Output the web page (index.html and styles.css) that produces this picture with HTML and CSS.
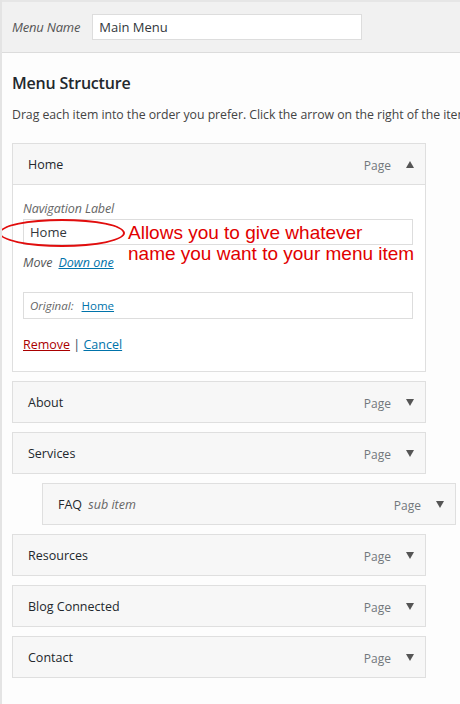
FILE: index.html
```html
<!DOCTYPE html>
<html>
<head>
<meta charset="utf-8">
<link rel="stylesheet" href="styles.css">
</head>
<body>
<div class="page">
  <div class="header">
    <span class="name-label">Menu Name</span>
    <div class="name-input">Main Menu</div>
  </div>
  <div class="content">
    <h2 class="title">Menu Structure</h2>
    <div class="desc-wrap"><p class="desc">Drag each item into the order you prefer. Click the arrow on the right of the item to reveal additional configuration options.</p></div>
    <ul class="menu">
      <li class="item open">
        <div class="item-bar">
          <span class="item-title">Home</span>
          <span class="item-type">Page</span>
          <span class="arrow up"></span>
        </div>
        <div class="item-body">
          <div class="field-label">Navigation Label</div>
          <div class="field-input">Home</div>
          <div class="move"><span class="move-label">Move</span><a class="link">Down one</a></div>
          <div class="original"><span class="orig-label">Original:</span><a class="link">Home</a></div>
          <div class="actions"><a class="remove">Remove</a> <span class="sep">|</span> <a class="link">Cancel</a></div>
        </div>
        <div class="ellipse"></div>
        <div class="note">Allows you to give whatever<br>name you want to your menu item</div>
      </li>
      <li class="item">
        <div class="item-bar"><span class="item-title">About</span><span class="item-type">Page</span><span class="arrow"></span></div>
      </li>
      <li class="item">
        <div class="item-bar"><span class="item-title">Services</span><span class="item-type">Page</span><span class="arrow"></span></div>
      </li>
      <li class="item sub">
        <div class="item-bar"><span class="item-title">FAQ <em class="subtag">sub item</em></span><span class="item-type">Page</span><span class="arrow"></span></div>
      </li>
      <li class="item">
        <div class="item-bar"><span class="item-title">Resources</span><span class="item-type">Page</span><span class="arrow"></span></div>
      </li>
      <li class="item">
        <div class="item-bar"><span class="item-title">Blog Connected</span><span class="item-type">Page</span><span class="arrow"></span></div>
      </li>
      <li class="item">
        <div class="item-bar"><span class="item-title">Contact</span><span class="item-type">Page</span><span class="arrow"></span></div>
      </li>
    </ul>
  </div>
</div>
</body>
</html>
```
FILE: styles.css
```css
html, body {
  margin: 0;
  padding: 0;
}
body {
  background: #fdfdfd;
  font-family: "Open Sans", "Noto Sans", sans-serif;
  color: #23282d;
  width: 460px;
  height: 704px;
  overflow: hidden;
}
.page {
  border-left: 2px solid #e4e4e4;
  min-height: 704px;
  box-sizing: border-box;
  overflow: hidden;
}
.header {
  height: 50px;
  background: #f1f1f1;
  border-top: 2px solid #e6e6e6;
  border-bottom: 1px solid #dcdcdc;
  display: flex;
  align-items: center;
  padding-left: 10px;
}
.name-label {
  font-style: italic;
  font-size: 13px;
  color: #555;
  letter-spacing: -0.2px;
}
.name-input {
  margin-left: 12px;
  width: 262px;
  height: 24px;
  border: 1px solid #ddd;
  background: #fff;
  font-size: 13px;
  line-height: 24px;
  padding-left: 6px;
  color: #32373c;
}
.content {
  padding: 0 10px;
}
.title {
  font-size: 16px;
  font-weight: 600;
  margin: 19px 0 0;
  line-height: 22px;
  color: #23282d;
  letter-spacing: -0.2px;
}
.desc-wrap {
  margin-top: 12px;
  width: 448px;
  overflow: hidden;
}
.desc {
  margin: 0;
  font-size: 12.3px;
  line-height: 18px;
  white-space: nowrap;
  color: #444;
  letter-spacing: -0.04px;
}
.menu {
  list-style: none;
  margin: 19px 0 0;
  padding: 0;
  display: flex;
  flex-direction: column;
  gap: 9px;
  width: 414px;
}
.item {
  position: relative;
  border: 1px solid #dfdfdf;
  background: #f7f7f7;
}
.item.sub {
  margin-left: 30px;
  margin-right: -30px;
}
.item-bar {
  height: 40px;
  display: flex;
  align-items: center;
  padding: 0 11px 0 15px;
}
.item.open .item-bar {
  border-bottom: 1px solid #dfdfdf;
}
.item-title {
  flex: 1;
  font-size: 12.5px;
  font-weight: 500;
  color: #23282d;
}
.subtag {
  font-weight: 400;
  color: #666;
  margin-left: 3px;
}
.item-type {
  font-size: 12px;
  color: #72777c;
  margin-right: 15px;
  margin-top: 2px;
}
.arrow {
  width: 0;
  height: 0;
  border-left: 4px solid transparent;
  border-right: 4px solid transparent;
  border-top: 7px solid #555;
}
.arrow.up {
  border-top: 0;
  border-bottom: 7px solid #555;
}
.item-body {
  background: #fff;
  height: 186px;
  padding: 15px 12px 0 10px;
  box-sizing: border-box;
  font-size: 12.5px;
}
.field-label {
  font-style: italic;
  color: #666;
  line-height: 18px;
  letter-spacing: -0.1px;
}
.field-input {
  margin-top: 1px;
  height: 24px;
  border: 1px solid #ddd;
  background: #fff;
  line-height: 24px;
  padding-left: 6px;
  color: #32373c;
  font-size: 13px;
}
.move {
  margin-top: 10px;
  color: #555;
  font-style: italic;
  line-height: 16px;
}
.move .link {
  margin-left: 6px;
}
.link {
  color: #0073aa;
  text-decoration: underline;
}
.original {
  margin-top: 21px;
  border: 1px solid #ddd;
  height: 25px;
  display: flex;
  align-items: center;
  padding-left: 6px;
  font-size: 11.5px;
}
.orig-label {
  font-style: italic;
  color: #666;
  margin-right: 8px;
}
.actions {
  margin-top: 17px;
  color: #555;
  font-size: 12.5px;
}
.sep {
  color: #23465a;
}
.remove {
  color: #a00;
  text-decoration: underline;
}
.ellipse {
  position: absolute;
  left: -14px;
  top: 75px;
  width: 126px;
  height: 28px;
  border: 2px solid #e10d0d;
  border-radius: 50%;
  box-sizing: border-box;
}
.note {
  position: absolute;
  left: 115px;
  top: 78px;
  font-family: "Liberation Sans", Arial, sans-serif;
  font-size: 19px;
  line-height: 21px;
  color: #e10000;
  white-space: nowrap;
}
```
